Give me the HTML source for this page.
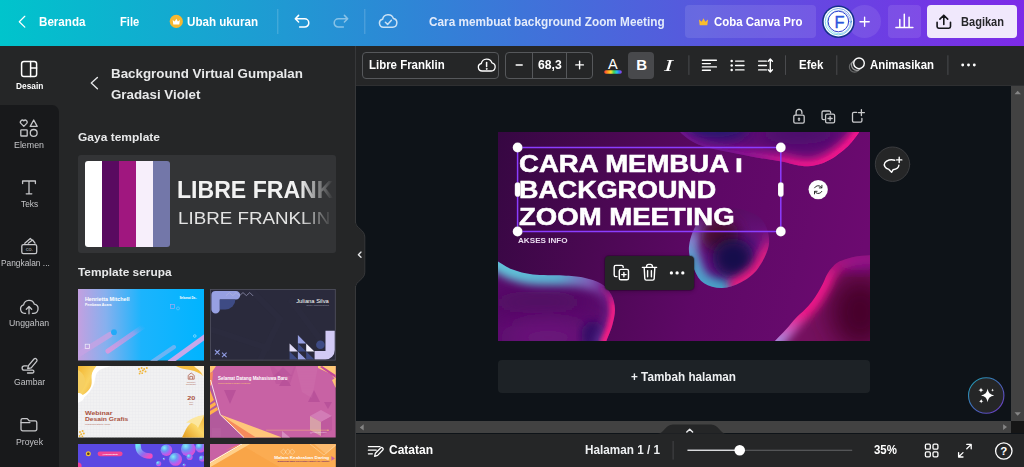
<!DOCTYPE html>
<html lang="id">
<head>
<meta charset="utf-8">
<title>Cara membuat background Zoom Meeting</title>
<style>
*{box-sizing:border-box;margin:0;padding:0}
html,body{width:1024px;height:467px;overflow:hidden;background:#0e1318;font-family:"Liberation Sans",sans-serif;color:#fff}
body{position:relative}
.a{position:absolute}
.t{position:absolute;white-space:pre;transform-origin:0 50%}
#header{left:0;top:0;width:1024px;height:46px;background:linear-gradient(90deg,#00c4cc 0%,#2e86d6 40%,#5a55de 70%,#7d2ae8 100%)}
.hb{position:absolute;top:5.3px;height:32.4px;border-radius:4px;background:rgba(255,255,255,.1)}
#nav{left:0;top:46px;width:58.5px;height:421px;background:#252627}
#navdark{left:0;top:105px;width:58.5px;height:362px;background:#18191b;border-top-right-radius:7px}
#panel{left:58.5px;top:46px;width:297.5px;height:421px;background:#252627;border-right:1px solid #37383a}
#toolbar{left:356px;top:46px;width:668px;height:40px;background:#252627;border-bottom:1px solid #2e2f31}
#footer{left:356px;top:433.5px;width:668px;height:33.5px;background:#252627}
#hscroll{left:356px;top:420.7px;width:655.4px;height:12.8px;background:#424242}
#vscroll{left:1011.4px;top:86px;width:12.6px;height:334.7px;background:#424242}
#corner{left:1011.4px;top:420.7px;width:12.6px;height:12.8px;background:#161616}
.box{position:absolute;top:51.5px;height:27.2px;border:1px solid #56585b;border-radius:4px}
#card{left:78.2px;top:154.6px;width:257.6px;height:98.4px;background:#333436;border-radius:3px;overflow:hidden}
#sw{left:84.8px;top:161px;width:85.6px;height:85.6px;border-radius:3px;overflow:hidden;display:flex}
#sw i{display:block;flex:1;height:100%}
.th{position:absolute;width:126.4px;height:71.4px;overflow:hidden}
#addpage{left:497.5px;top:360.4px;width:372px;height:33px;background:#1d2226;border-radius:4px}
#page{left:497.5px;top:131.75px;width:372.2px;height:209.3px;overflow:hidden;background:#560a5c}
#ftb{left:604.7px;top:256px;width:89.7px;height:33.8px;background:#252627;border-radius:4px;box-shadow:0 0 0 1px rgba(0,0,0,.18),0 1px 4px rgba(0,0,0,.3)}
</style>
</head>
<body>
<div id="header" class="a"></div>
<div class="hb" style="left:685px;width:130.5px"></div>
<div class="hb" style="left:848.2px;top:5.3px;width:32.9px;height:32.9px;border-radius:50%;background:rgba(255,255,255,.09)"></div>
<div class="hb" style="left:887.5px;width:33.2px"></div>
<div class="hb" style="left:927.1px;width:90.3px;background:#f0e8fc"></div>
<span class="t " style="left:39.30px;top:15px;font-size:12px;line-height:14px;font-weight:bold;color:#fff;transform:scaleX(0.9681);">Beranda</span>
<span class="t " style="left:119.50px;top:15px;font-size:12px;line-height:14px;font-weight:bold;color:#fff;transform:scaleX(0.9288);">File</span>
<span class="t " style="left:187.10px;top:15px;font-size:12px;line-height:14px;font-weight:bold;color:#fff;transform:scaleX(0.9680);">Ubah ukuran</span>
<span class="t " style="left:428.70px;top:15px;font-size:12px;line-height:14px;font-weight:bold;color:#e3ebfb;transform:scaleX(0.9815);">Cara membuat background Zoom Meeting</span>
<span class="t " style="left:713.60px;top:15px;font-size:12px;line-height:14px;font-weight:bold;color:#fff;transform:scaleX(0.9536);">Coba Canva Pro</span>
<span class="t " style="left:960.70px;top:15px;font-size:12px;line-height:14px;font-weight:bold;color:#26262a;transform:scaleX(0.9210);">Bagikan</span>
<div id="nav" class="a"></div><div id="navdark" class="a"></div>
<span class="t " style="left:16.00px;top:81px;font-size:9px;line-height:10px;font-weight:bold;color:#fff;transform:scaleX(0.9249);">Desain</span>
<span class="t " style="left:14.00px;top:140px;font-size:9px;line-height:10px;font-weight:normal;color:#c4c5c8;transform:scaleX(0.9831);">Elemen</span>
<span class="t " style="left:20.60px;top:199px;font-size:9px;line-height:10px;font-weight:normal;color:#c4c5c8;transform:scaleX(0.9235);">Teks</span>
<span class="t " style="left:1.30px;top:258px;font-size:9px;line-height:10px;font-weight:normal;color:#c4c5c8;transform:scaleX(0.9287);">Pangkalan ...</span>
<span class="t " style="left:9.00px;top:318px;font-size:9px;line-height:10px;font-weight:normal;color:#c4c5c8;transform:scaleX(0.9676);">Unggahan</span>
<span class="t " style="left:13.50px;top:377px;font-size:9px;line-height:10px;font-weight:normal;color:#c4c5c8;transform:scaleX(0.9595);">Gambar</span>
<span class="t " style="left:15.70px;top:437px;font-size:9px;line-height:10px;font-weight:normal;color:#c4c5c8;transform:scaleX(0.9637);">Proyek</span>
<div id="panel" class="a"></div>
<span class="t " style="left:111.30px;top:66px;font-size:13px;line-height:15px;font-weight:bold;color:#e8e9ea;transform:scaleX(1.0270);">Background Virtual Gumpalan</span>
<span class="t " style="left:111.30px;top:87px;font-size:13px;line-height:15px;font-weight:bold;color:#e8e9ea;transform:scaleX(1.0254);">Gradasi Violet</span>
<span class="t " style="left:78.00px;top:131px;font-size:11.5px;line-height:12px;font-weight:bold;color:#e8e9ea;transform:scaleX(1.0429);">Gaya template</span>
<span class="t " style="left:78.20px;top:266px;font-size:11.5px;line-height:12px;font-weight:bold;color:#e8e9ea;transform:scaleX(1.0326);">Template serupa</span>
<div id="card" class="a">
</div>
<div id="sw" class="a"><i style="background:#fff"></i><i style="background:#590a60"></i><i style="background:#a0177f"></i><i style="background:#f7effb"></i><i style="background:#7377a9"></i></div>
<div class="a" style="left:176px;top:160px;width:159.8px;height:90px;overflow:hidden">
<span class="t " style="left:1.30px;top:17px;font-size:23px;line-height:26px;font-weight:bold;color:#f2f2f2;transform:scaleX(1.0034);">LIBRE FRANKLIN</span>
<span class="t " style="left:1.50px;top:49px;font-size:17px;line-height:19px;font-weight:normal;color:#e4e4e4;transform:scaleX(1.1041);">LIBRE FRANKLIN</span>
<div class="a" style="left:124px;top:0;width:35.8px;height:90px;background:linear-gradient(90deg,rgba(51,52,54,0),#333436 92%)"></div>
</div>
<svg class="a" style="left:77.8px;top:289.1px" width="126.4" height="71.5" viewBox="0 0 126.4 71.5" font-family="Liberation Sans, sans-serif">
<defs><linearGradient id="t1g" x1="0" x2="1" y1="0" y2="0"><stop offset="0" stop-color="#c3a0e0"/><stop offset=".22" stop-color="#86b0ee"/><stop offset=".5" stop-color="#1cb4fd"/><stop offset="1" stop-color="#00b4ff"/></linearGradient>
<linearGradient id="t1s" x1="0" x2="1" y1="1" y2="0"><stop offset="0" stop-color="#d29be0"/><stop offset=".7" stop-color="#b79be8" stop-opacity=".7"/><stop offset="1" stop-color="#5cb0f8" stop-opacity="0"/></linearGradient>
<filter id="t1b"><feGaussianBlur stdDeviation=".5"/></filter></defs>
<rect width="126.4" height="71.5" fill="url(#t1g)"/>
<g filter="url(#t1b)">
<path d="M-3 67.6L32 45.6" stroke="#c4a2e4" stroke-opacity=".85" stroke-width="5.4" stroke-linecap="round"/>
<circle cx="36" cy="43.2" r="2.9" fill="#22aaf8"/>
<path d="M30 62L66 37" stroke="url(#t1s)" stroke-width="5" stroke-linecap="round"/>
<path d="M74 73L96 58" stroke="#a7b4ee" stroke-opacity=".6" stroke-width="4" stroke-linecap="round"/>
<path d="M92 73L128 47" stroke="#c6a8ea" stroke-width="5" stroke-linecap="round"/>
</g>
<rect x="7.2" y="55.2" width="4.4" height="4.4" fill="none" stroke="#fff" stroke-opacity=".85" stroke-width=".7"/>
<rect x="92.6" y="15.6" width="4" height="4" fill="none" stroke="#b9a8ee" stroke-width=".6"/>
<circle cx="100" cy="19.4" r="1.5" fill="none" stroke="#8fd0fa" stroke-width=".5"/>
<circle cx="116.8" cy="47" r="1.3" fill="none" stroke="#d8f0ff" stroke-width=".5"/>
<text x="6.9" y="11.9" font-size="5" font-weight="bold" fill="#fff" textLength="44.6" lengthAdjust="spacingAndGlyphs">Henrietta Mitchell</text>
<text x="6.9" y="16.9" font-size="3.2" font-weight="bold" fill="#fff" textLength="26.6" lengthAdjust="spacingAndGlyphs">Pembawa Acara</text>
<text x="101.4" y="10.3" font-size="2.6" font-weight="bold" fill="#fff" textLength="17.4" lengthAdjust="spacingAndGlyphs">Selamat Da..</text>
</svg>
<svg class="a" style="left:210.3px;top:289.1px" width="125.7" height="71.5" viewBox="0 0 125.7 71.5" font-family="Liberation Sans, sans-serif">
<rect width="125.7" height="71.5" fill="#2a2a3c"/>
<path d="M40 0L70 30 50 71M0 40L60 60M80 10L110 50" stroke="#2f2f42" stroke-width="6" fill="none" opacity=".35"/>
<path d="M5.5 2H26A4.2 4.2 0 0 1 26 10.4H9.8V20.4A4.2 4.2 0 0 1 1.4 20.4V6.1A4.1 4.1 0 0 1 5.5 2Z" fill="#97a0e2"/>
<path d="M9.8 10.4H25.4A10 10 0 0 1 15.4 20.4H9.8Z" fill="#3e4b84"/>
<path d="M16 6.6L19.4 3.6 22.8 6.6 26.2 3.6 29.6 6.6 33 3.6 36.4 6.6 39.8 3.6 43.2 7" stroke="#b9badc" stroke-width=".55" fill="none"/>
<text x="86.2" y="13.7" font-size="5.6" fill="#fff" textLength="32.6" lengthAdjust="spacingAndGlyphs">Juliana Silva</text>
<text x="96.2" y="17.4" font-size="2.3" fill="#9a9aae" textLength="22.6" lengthAdjust="spacingAndGlyphs">Guru Matematika</text>
<path d="M115.5 41.7H124.8V61A9.4 9.4 0 0 1 115.4 70.4H104.6V62H115.5Z" fill="#d2caf5"/>
<circle cx="110.4" cy="55.8" r="4.3" fill="#3e4b84"/>
<g>
<path d="M87.9 46L96.2 54.4H87.9Z" fill="#97a0e2"/>
<path d="M79.6 54.4L87.9 62.4H79.6Z" fill="#e2defa"/><path d="M87.9 54.4L96.2 62.4H87.9Z" fill="#3e4b84"/><path d="M96.2 54.4L104.5 62.4H96.2Z" fill="#f1effc"/>
<path d="M79.6 62.4L87.9 70.4H79.6Z" fill="#3e4b84"/><path d="M87.9 62.4L96.2 70.4H87.9Z" fill="#97a0e2"/><path d="M96.2 62.4L104.5 70.4H96.2Z" fill="#3e4b84"/>
<path d="M87.9 54.4V62.4H96.2Z" fill="#23233a" opacity=".0"/>
</g>
<path d="M5 61L9.6 65.6M9.6 61L5 65.6M12 63.6L16.6 68.2M16.6 63.6L12 68.2" stroke="#8f9ae0" stroke-width="1.1"/>
<rect x=".4" y=".4" width="124.9" height="70.7" fill="none" stroke="#51515f" stroke-width=".8"/>
</svg>
<svg class="a" style="left:77.8px;top:366.3px" width="126.4" height="71.5" viewBox="0 0 126.4 71.5" font-family="Liberation Sans, sans-serif">
<defs><pattern id="t3p" width="3" height="3" patternUnits="userSpaceOnUse"><path d="M3 0H0V3" fill="none" stroke="#e2e2e6" stroke-width=".3"/></pattern>
<linearGradient id="gold" x1="0" x2="1" y1="0" y2="1"><stop offset="0" stop-color="#f3b52f"/><stop offset=".5" stop-color="#f9d363"/><stop offset="1" stop-color="#e9a223"/></linearGradient>
<linearGradient id="gold2" x1="0" x2="1" y1="1" y2="0"><stop offset="0" stop-color="#e39a1c"/><stop offset=".55" stop-color="#fbd768"/><stop offset="1" stop-color="#f0b335"/></linearGradient>
<filter id="t3b"><feGaussianBlur stdDeviation=".6"/></filter></defs>
<rect width="126.4" height="71.5" fill="#f1f1f2"/><rect width="126.4" height="71.5" fill="url(#t3p)"/>
<g filter="url(#t3b)">
<path d="M0 0H34C27 1.5 21 3 18.5 7.5 16.5 12 17.5 17 13.5 23 10 29 4 33 0 37Z" fill="#fff"/>
<path d="M0 0H18.5C16 3 14 5.5 13.6 9.5 13.2 14 15 18 11.5 23 8 28 3 29.5 0 33Z" fill="url(#gold)"/>
<path d="M0 4C4.5 6.5 8 11 7 17.5 6.2 23 3 25.5 0 27.5Z" fill="#f6cf62"/>
<path d="M0 27C3 27 6 29 6 32 5 35 2 36 0 36.5Z" fill="#fff"/>
<path d="M98 0H126.4V11C122 7 118 5 112 4 106 3 101 2 98 0Z" fill="#f5be40"/>
<path d="M118 2C122 4 125 8 126.4 14V0H116Z" fill="#fff" opacity=".8"/>
<path d="M126.4 49C120 52 114 55 110 60 107 64 106 68 104 71.5H126.4Z" fill="url(#gold2)"/>
<path d="M126.4 49C118 50 112 53 108 57 114 56 118 58 120 62Z" fill="#fce7a0"/>
</g>
<g fill="#f0b63a"><circle cx="61" cy="3" r="1"/><circle cx="63.6" cy="2" r="1"/><circle cx="66.2" cy="3" r="1"/><circle cx="68.8" cy="2" r="1"/><circle cx="62.3" cy="5.4" r="1"/><circle cx="64.9" cy="4.6" r="1"/><circle cx="67.5" cy="5.4" r="1"/><circle cx="61.6" cy="7.6" r=".9"/><circle cx="64.2" cy="7.2" r=".9"/>
<circle cx="2" cy="66" r="1"/><circle cx="4.6" cy="65" r="1"/><circle cx="3.2" cy="68.2" r="1"/><circle cx="5.8" cy="67.6" r="1"/><circle cx="1.6" cy="70" r=".9"/><circle cx="4.4" cy="70.4" r=".9"/></g>
<text x="6.9" y="48.8" font-size="5.6" font-weight="bold" fill="#a9513e" textLength="27.6" lengthAdjust="spacingAndGlyphs">Webinar</text>
<text x="6.9" y="55.1" font-size="5.6" font-weight="bold" fill="#a9513e" textLength="43.4" lengthAdjust="spacingAndGlyphs">Desain Grafis</text>
<text x="6.9" y="59.4" font-size="2.3" fill="#b06a58" textLength="25.4" lengthAdjust="spacingAndGlyphs">reallygreatsite.com</text>
<path d="M110.2 13.2V9.4L113.2 7 116.2 9.4V13.2ZM111.8 13V10.4H114.6V13" fill="none" stroke="#a9513e" stroke-width=".7"/>
<text x="113.2" y="17" font-size="2" fill="#b06a58" text-anchor="middle">Corporate</text>
<text x="113.2" y="19.2" font-size="2.4" fill="#b06a58" text-anchor="middle">Company</text>
<text x="109.3" y="34.2" font-size="5.8" font-weight="bold" fill="#a9513e" textLength="8" lengthAdjust="spacingAndGlyphs">20</text>
<text x="113.3" y="36.8" font-size="1.9" fill="#b06a58" text-anchor="middle">JULI</text>
<text x="113.3" y="38.8" font-size="1.9" fill="#b06a58" text-anchor="middle">2024</text>
</svg>
<svg class="a" style="left:210.3px;top:366.3px" width="125.7" height="71.5" viewBox="0 0 125.7 71.5" font-family="Liberation Sans, sans-serif">
<defs><pattern id="t4d" width="1.6" height="1.6" patternUnits="userSpaceOnUse"><circle cx=".8" cy=".8" r=".35" fill="#e6a6cc"/></pattern></defs>
<rect width="125.7" height="71.5" fill="#c862a4"/>
<g fill="#b9529a"><path d="M64 10L73 1 82 10ZM69 20L75 10 81 20Z"/><path d="M14 24H26L20 38Z"/><path d="M98 36L104 24 110 36Z"/><path d="M114 36H122L118 43Z"/><path d="M60 0H86L80 18 66 18Z" opacity=".5"/></g>
<path d="M86 1L108 0 102 32 92 26Z" fill="url(#t4d)" opacity=".7"/><path d="M64 1H84L78 16Z" fill="url(#t4d)" opacity=".5"/>
<path d="M0 14L10 48 34 71.5H0Z" fill="#b25a9c"/>
<path d="M0 0H6L2 6 0 7Z" fill="#ffc572"/><path d="M0 7L3 6 2 18 0 20Z" fill="#f58c5e"/>
<path d="M0 24L4 34 0 37ZM0 39L5 36 6 39 0 43ZM0 45L7 41 8 44 0 49Z" fill="#ffb24c"/>
<path d="M10.2 48.6L72 71.5H46L34 71.5Z" fill="#ffc67a"/><path d="M10.2 48.6L46 71.5H34Z" fill="#f68a5c"/>
<path d="M.6 14L10.2 48.6 34 71.5" stroke="#fff" stroke-width=".8" fill="none"/>
<path d="M100 50L111 44 122 50 111 56Z" fill="#d27cb6"/><path d="M100 50L111 56V70L100 64Z" fill="#d7a0a8"/><path d="M111 56L122 50V64L111 70Z" fill="#bf5a9e"/>
<path d="M108 0H125.7V14L121 8 108 2Z" fill="#ffc978"/><path d="M112 0L125.7 9V12L110 1Z" fill="#c2489a"/>
<path d="M122 14L125.7 12V22Z" fill="#ffc572"/>
<path d="M72 65L80 71.5H72Z" fill="#d88ec0"/>
<rect x="2" y="62" width="9" height="9" fill="url(#t4d)" opacity=".45"/>
<path d="M56.2 64.2H117.6" stroke="#ffc572" stroke-width=".45"/><circle cx="118" cy="64.2" r=".7" fill="#ffc572"/>
<text x="8" y="14.2" font-size="4.7" font-weight="bold" fill="#fff" textLength="69.6" lengthAdjust="spacingAndGlyphs">Selamat Datang Mahasiswa Baru</text>
<text x="8" y="18.5" font-size="2.4" fill="#ffcf6e" textLength="32.2" lengthAdjust="spacingAndGlyphs">Universitas Fauget Wiguna</text>
<text x="100" y="66.6" font-size="1.8" fill="#f4d6ea" textLength="17" lengthAdjust="spacingAndGlyphs">@reallygreatsite</text>
</svg>
<svg class="a" style="left:77.8px;top:443.7px" width="126.4" height="23.3" viewBox="0 0 126.4 23.3" font-family="Liberation Sans, sans-serif">
<defs><radialGradient id="sp" cx=".32" cy=".3" r=".85"><stop offset="0" stop-color="#7ff0f4"/><stop offset=".35" stop-color="#6a98f4"/><stop offset=".65" stop-color="#b85cf0"/><stop offset="1" stop-color="#f24cb4"/></radialGradient>
<linearGradient id="tube" x1="0" x2="1" y1="0" y2="1"><stop offset="0" stop-color="#6fe6f2"/><stop offset=".6" stop-color="#8f6cf2"/><stop offset="1" stop-color="#f04cc0"/></linearGradient></defs>
<rect width="126.4" height="23.3" fill="#5a49e2"/>
<path d="M60 1C60 8 64 12 72 12" fill="none" stroke="url(#tube)" stroke-width="5.4" stroke-linecap="round"/>
<circle cx="110.3" cy="5" r="7.3" fill="url(#sp)"/><circle cx="88.4" cy="6.2" r="5.8" fill="url(#sp)"/><circle cx="97.5" cy="15.3" r="6.5" fill="url(#sp)"/><circle cx="122.6" cy="3.4" r="5.2" fill="url(#sp)"/><circle cx="111.6" cy="13" r="3.1" fill="url(#sp)"/><circle cx="80.6" cy="19.6" r="2.6" fill="url(#sp)"/><circle cx="124" cy="14.6" r="3" fill="url(#sp)"/><circle cx="106.2" cy="21" r="1.6" fill="url(#sp)"/><circle cx="86" cy="15" r="1.2" fill="url(#sp)"/>
<circle cx="0" cy="22" r="3.6" fill="#ee3f9a"/>
<circle cx="10.3" cy="9.7" r="2.5" fill="#f2c23c"/><circle cx="10.3" cy="9.7" r="1.3" fill="#5a3a1c"/>
<rect x="19.6" y="7.4" width="25" height="4.8" rx="2.4" fill="#ef4597"/>
<text x="24.4" y="10.7" font-size="2.4" font-weight="bold" fill="#fff" textLength="15.6" lengthAdjust="spacingAndGlyphs">@reallygreatsite</text>
</svg>
<svg class="a" style="left:210.3px;top:443.7px" width="125.7" height="23.3" viewBox="0 0 125.7 23.3" font-family="Liberation Sans, sans-serif">
<rect width="125.7" height="23.3" fill="#f9a548"/>
<path d="M30 0H125.7V23.3H70Z" fill="#fbb05a" opacity=".6"/>
<path d="M104 0L116 10 125.7 2V0Z" fill="#fcc27c" opacity=".7"/><path d="M100 0L114 11 125.7 1" fill="none" stroke="#fde0b8" stroke-width=".5"/>
<path d="M0 0H31L0 18Z" fill="#c862a4"/>
<path d="M31 0L0 18V19.2L33 0Z" fill="#fff" opacity=".9"/><path d="M33 0L0 19.2V23.3L40 0Z" fill="#ffd08a"/>
<path d="M16 6L30 0 26 3Z" fill="#f58c5e"/>
<path d="M70.6 7.8L73.4 5.2 76.2 7.8 73.4 10.4ZM75 7.8L77.8 5.2 80.6 7.8 77.8 10.4ZM79.4 7.8L82.2 5.2 85 7.8 82.2 10.4Z" fill="none" stroke="#fde6c4" stroke-width=".45"/>
<text x="64.2" y="15" font-size="4.4" font-weight="bold" fill="#fff" textLength="55" lengthAdjust="spacingAndGlyphs">Malam Keakraban Daring</text>
<text x="67.6" y="18.4" font-size="2.2" font-weight="bold" fill="#7a2a6c" textLength="51.6" lengthAdjust="spacingAndGlyphs">Mahasiswa Baru Universitas Fauget | 20 Agustus</text>
<path d="M121.4 12L125 14.4 121.4 16.8Z" fill="#c862a4"/>
</svg>

<div id="toolbar" class="a"></div>
<div class="box" style="left:362.1px;width:136.7px"></div>
<div class="box" style="left:505.4px;width:87.3px"></div>
<div class="a" style="left:532px;top:52px;width:1px;height:26px;background:#56585b"></div>
<div class="a" style="left:565.7px;top:52px;width:1px;height:26px;background:#56585b"></div>
<div class="a" style="left:628px;top:51.5px;width:26.2px;height:27.2px;border-radius:4px;background:#48494c"></div>
<span class="t " style="left:368.70px;top:58px;font-size:12px;line-height:14px;font-weight:bold;color:#fff;transform:scaleX(0.9539);">Libre Franklin</span>
<span class="t " style="left:537.90px;top:58px;font-size:12px;line-height:14px;font-weight:bold;color:#fff;transform:scaleX(1.0146);">68,3</span>
<span class="t " style="left:608.00px;top:56px;font-size:14.5px;line-height:16px;font-weight:normal;color:#fff;transform:scaleX(1.0000);">A</span>
<span class="t " style="left:636.20px;top:56px;font-size:15px;line-height:17px;font-weight:bold;color:#fff;transform:scaleX(1.0000);">B</span>
<span class="t " style="left:664.40px;top:57px;font-size:16px;line-height:17px;font-weight:normal;color:#fff;transform:scaleX(1.6891);font-family:'Liberation Serif',serif;font-style:italic;">I</span>
<span class="t " style="left:799.30px;top:58px;font-size:12px;line-height:14px;font-weight:bold;color:#fff;transform:scaleX(0.9582);">Efek</span>
<span class="t " style="left:870.40px;top:58px;font-size:12px;line-height:14px;font-weight:bold;color:#fff;transform:scaleX(0.9501);">Animasikan</span>
<div id="page" class="a"><svg class="a" style="left:0;top:0" width="372.2" height="209.3" viewBox="0 0 372 209" preserveAspectRatio="none">
<defs>
<linearGradient id="pb" gradientUnits="userSpaceOnUse" x1="0" y1="0" x2="372" y2="90"><stop offset="0" stop-color="#360742"/><stop offset=".3" stop-color="#4a0852"/><stop offset=".6" stop-color="#5e0866"/><stop offset=".85" stop-color="#660a6c"/><stop offset="1" stop-color="#6c0a70"/></linearGradient>
<linearGradient id="g1" gradientUnits="userSpaceOnUse" x1="225" y1="0" x2="345" y2="0"><stop offset="0" stop-color="#7c1294" stop-opacity=".55"/><stop offset=".3" stop-color="#9c1490"/><stop offset=".6" stop-color="#e0168c"/><stop offset="1" stop-color="#f0188c"/></linearGradient>
<linearGradient id="f2" gradientUnits="userSpaceOnUse" x1="0" y1="76" x2="0" y2="120"><stop offset="0" stop-color="#5a0c64"/><stop offset="1" stop-color="#6a1486"/></linearGradient>
<linearGradient id="g3" gradientUnits="userSpaceOnUse" x1="0" y1="0" x2="110" y2="0"><stop offset="0" stop-color="#62c6da"/><stop offset=".55" stop-color="#5aaed0"/><stop offset=".85" stop-color="#8a6cc8" stop-opacity=".8"/><stop offset="1" stop-color="#8a3cb0" stop-opacity=".3"/></linearGradient>
<linearGradient id="g3p" gradientUnits="userSpaceOnUse" x1="0" y1="150" x2="0" y2="209"><stop offset="0" stop-color="#a01890" stop-opacity="0"/><stop offset=".4" stop-color="#e81a84"/><stop offset="1" stop-color="#f01c84"/></linearGradient>
<linearGradient id="g4" gradientUnits="userSpaceOnUse" x1="0" y1="120" x2="0" y2="209"><stop offset="0" stop-color="#a0148c" stop-opacity=".4"/><stop offset=".3" stop-color="#e6168a"/><stop offset=".7" stop-color="#ee1888"/><stop offset=".88" stop-color="#c85cc0"/><stop offset="1" stop-color="#a690e2"/></linearGradient>
<linearGradient id="g2" gradientUnits="userSpaceOnUse" x1="0" y1="95" x2="0" y2="150"><stop offset="0" stop-color="#a01890" stop-opacity="0"/><stop offset=".45" stop-color="#e01a80"/><stop offset="1" stop-color="#f01c80"/></linearGradient>
<linearGradient id="g2l" gradientUnits="userSpaceOnUse" x1="0" y1="85" x2="0" y2="155"><stop offset="0" stop-color="#8a5cc0" stop-opacity=".15"/><stop offset=".3" stop-color="#8c84d6"/><stop offset=".55" stop-color="#5c9ccc"/><stop offset="1" stop-color="#48a0c8"/></linearGradient>
<filter id="b2" x="-20%" y="-20%" width="140%" height="140%"><feGaussianBlur stdDeviation="2"/></filter>
<filter id="b4" x="-20%" y="-20%" width="140%" height="140%"><feGaussianBlur stdDeviation="4"/></filter>
<filter id="b7" x="-30%" y="-30%" width="160%" height="160%"><feGaussianBlur stdDeviation="7"/></filter>
<filter id="b12" x="-50%" y="-50%" width="200%" height="200%"><feGaussianBlur stdDeviation="12"/></filter>
<clipPath id="c1"><path d="M178.0 -6.0C179.0 -4.7 180.8 -0.8 184.0 2.0C187.2 4.8 192.2 8.6 197.0 11.0C201.8 13.4 207.0 14.9 213.0 16.5C219.0 18.1 226.3 19.2 233.0 20.5C239.7 21.8 246.8 23.4 253.0 24.5C259.2 25.6 264.7 26.4 270.0 27.3C275.3 28.2 280.3 28.9 285.0 29.8C289.7 30.8 293.8 32.3 298.0 33.0C302.2 33.7 306.0 34.4 310.0 34.2C314.0 34.0 318.0 33.3 322.0 32.0C326.0 30.7 330.5 28.5 334.0 26.5C337.5 24.5 340.3 22.1 343.0 20.0C345.7 17.9 347.8 16.2 350.0 14.0C352.2 11.8 354.2 9.3 356.0 7.0C357.8 4.7 359.7 2.2 361.0 0.0C362.3 -2.2 363.5 -5.0 364.0 -6.0Z"/></clipPath>
<clipPath id="c2"><path d="M233.0 76.0C242.8 75.8 255.7 80.3 262.0 86.0C268.3 91.7 271.3 101.7 271.0 110.0C270.7 118.3 264.7 129.3 260.0 136.0C255.3 142.7 249.0 146.7 243.0 150.0C237.0 153.3 230.2 155.5 224.0 155.7C217.8 155.9 210.7 154.1 206.0 151.0C201.3 147.9 198.5 143.2 196.0 137.0C193.5 130.8 189.8 121.8 191.0 113.5C192.2 105.2 196.0 93.2 203.0 87.0C210.0 80.8 223.2 76.2 233.0 76.0Z"/></clipPath>
<clipPath id="c3"><path d="M-6.0 126.0C-5.0 126.5 -3.4 127.4 0.0 129.3C3.4 131.2 8.8 135.2 14.6 137.4C20.4 139.6 26.4 141.4 34.8 142.4C43.2 143.4 56.6 142.9 65.0 143.4C73.4 143.9 78.7 144.1 85.1 145.4C91.5 146.8 98.5 148.6 103.2 151.5C107.9 154.4 111.0 158.4 113.3 162.6C115.6 166.8 116.7 171.7 116.9 176.7C117.1 181.7 115.7 187.4 114.3 192.8C112.9 198.2 109.7 205.0 108.3 208.9C106.9 212.8 106.4 214.8 106.0 216.0L-6 216Z"/></clipPath>
<clipPath id="c4"><path d="M270.0 216.0C271.1 214.8 273.5 212.2 276.5 209.0C279.5 205.8 284.5 200.8 288.0 197.0C291.5 193.2 294.5 189.2 297.5 186.0C300.5 182.8 303.3 180.7 306.0 178.0C308.7 175.3 311.2 172.8 313.5 169.8C315.8 166.8 318.0 163.3 320.0 160.0C322.0 156.7 324.0 152.7 325.5 149.7C327.0 146.7 327.6 144.3 329.0 142.0C330.4 139.7 331.9 137.5 333.6 135.6C335.3 133.7 337.0 131.8 339.0 130.5C341.0 129.2 343.2 128.4 345.7 127.5C348.2 126.6 351.0 125.7 354.0 125.0C357.0 124.3 360.8 123.8 363.8 123.5C366.8 123.2 369.3 123.1 372.0 123.0C374.7 122.9 378.7 123.0 380.0 123.0L380 216Z"/></clipPath>
</defs>
<rect width="372" height="209" fill="url(#pb)"/>
<g clip-path="url(#c1)">
<rect x="170" y="-6" width="202" height="50" fill="#5e0c74"/>
<ellipse cx="215" cy="-4" rx="36" ry="14" fill="#2c1470" filter="url(#b7)"/>
<ellipse cx="300" cy="2" rx="36" ry="10" fill="#4c0c6c" filter="url(#b7)"/>
<path d="M178.0 -6.0C179.0 -4.7 180.8 -0.8 184.0 2.0C187.2 4.8 192.2 8.6 197.0 11.0C201.8 13.4 207.0 14.9 213.0 16.5C219.0 18.1 226.3 19.2 233.0 20.5C239.7 21.8 246.8 23.4 253.0 24.5C259.2 25.6 264.7 26.4 270.0 27.3C275.3 28.2 280.3 28.9 285.0 29.8C289.7 30.8 293.8 32.3 298.0 33.0C302.2 33.7 306.0 34.4 310.0 34.2C314.0 34.0 318.0 33.3 322.0 32.0C326.0 30.7 330.5 28.5 334.0 26.5C337.5 24.5 340.3 22.1 343.0 20.0C345.7 17.9 347.8 16.2 350.0 14.0C352.2 11.8 354.2 9.3 356.0 7.0C357.8 4.7 359.7 2.2 361.0 0.0C362.3 -2.2 363.5 -5.0 364.0 -6.0" fill="none" stroke="url(#g1)" stroke-width="15" filter="url(#b4)"/>
<path d="M178.0 -6.0C179.0 -4.7 180.8 -0.8 184.0 2.0C187.2 4.8 192.2 8.6 197.0 11.0C201.8 13.4 207.0 14.9 213.0 16.5C219.0 18.1 226.3 19.2 233.0 20.5C239.7 21.8 246.8 23.4 253.0 24.5C259.2 25.6 264.7 26.4 270.0 27.3C275.3 28.2 280.3 28.9 285.0 29.8C289.7 30.8 293.8 32.3 298.0 33.0C302.2 33.7 306.0 34.4 310.0 34.2C314.0 34.0 318.0 33.3 322.0 32.0C326.0 30.7 330.5 28.5 334.0 26.5C337.5 24.5 340.3 22.1 343.0 20.0C345.7 17.9 347.8 16.2 350.0 14.0C352.2 11.8 354.2 9.3 356.0 7.0C357.8 4.7 359.7 2.2 361.0 0.0C362.3 -2.2 363.5 -5.0 364.0 -6.0" fill="none" stroke="url(#g1)" stroke-width="5" filter="url(#b2)" opacity=".9"/>
</g>
<g clip-path="url(#c2)">
<rect x="185" y="70" width="95" height="95" fill="url(#f2)"/>
<path d="M203.0 87.0C201.0 91.4 192.2 105.2 191.0 113.5C189.8 121.8 193.5 130.8 196.0 137.0C198.5 143.2 201.3 147.9 206.0 151.0C210.7 154.1 219.3 155.2 224.0 155.7C228.7 156.2 232.3 154.3 234.0 154.0" fill="none" stroke="url(#g2l)" stroke-width="19" filter="url(#b4)"/>
<ellipse cx="222" cy="103" rx="19" ry="17" fill="#48082e" filter="url(#b7)"/>
<ellipse cx="235" cy="126" rx="21" ry="20" fill="#16084c" filter="url(#b7)"/>
<path d="M268.0 95.0C268.5 97.5 272.3 103.2 271.0 110.0C269.7 116.8 264.7 129.3 260.0 136.0C255.3 142.7 247.7 146.9 243.0 150.0C238.3 153.1 233.8 153.8 232.0 154.5" fill="none" stroke="url(#g2)" stroke-width="13" filter="url(#b4)"/>
</g>
<g clip-path="url(#c3)">
<rect x="-6" y="120" width="130" height="96" fill="#5a0c6c"/>
<ellipse cx="40" cy="170" rx="55" ry="12" fill="#500a60" filter="url(#b12)"/>
<ellipse cx="50" cy="205" rx="45" ry="16" fill="#6c127c" filter="url(#b12)"/>
<ellipse cx="95" cy="203" rx="12" ry="14" fill="#340a68" filter="url(#b4)"/>
<path d="M-6.0 126.0C-5.0 126.5 -3.4 127.4 0.0 129.3C3.4 131.2 8.8 135.2 14.6 137.4C20.4 139.6 26.4 141.4 34.8 142.4C43.2 143.4 56.6 142.9 65.0 143.4C73.4 143.9 78.7 144.1 85.1 145.4C91.5 146.8 98.5 148.6 103.2 151.5C107.9 154.4 111.0 158.4 113.3 162.6C115.6 166.8 116.7 171.7 116.9 176.7C117.1 181.7 115.7 187.4 114.3 192.8C112.9 198.2 109.7 205.0 108.3 208.9C106.9 212.8 106.4 214.8 106.0 216.0" fill="none" stroke="url(#g3)" stroke-width="20" filter="url(#b4)"/>
<path d="M103.2 151.5C104.9 153.3 111.0 158.4 113.3 162.6C115.6 166.8 116.7 171.7 116.9 176.7C117.1 181.7 115.7 187.4 114.3 192.8C112.9 198.2 109.7 205.0 108.3 208.9C106.9 212.8 106.4 214.8 106.0 216.0" fill="none" stroke="url(#g3p)" stroke-width="11" filter="url(#b2)"/>
</g>
<g clip-path="url(#c4)">
<rect x="268" y="118" width="112" height="98" fill="#74105e"/>
<ellipse cx="362" cy="180" rx="30" ry="36" fill="#46042a" filter="url(#b12)"/>
<ellipse cx="362" cy="128" rx="24" ry="10" fill="#780e84" filter="url(#b7)"/>
<path d="M270.0 216.0C271.1 214.8 273.5 212.2 276.5 209.0C279.5 205.8 284.5 200.8 288.0 197.0C291.5 193.2 294.5 189.2 297.5 186.0C300.5 182.8 303.3 180.7 306.0 178.0C308.7 175.3 311.2 172.8 313.5 169.8C315.8 166.8 318.0 163.3 320.0 160.0C322.0 156.7 324.0 152.7 325.5 149.7C327.0 146.7 327.6 144.3 329.0 142.0C330.4 139.7 331.9 137.5 333.6 135.6C335.3 133.7 337.0 131.8 339.0 130.5C341.0 129.2 343.2 128.4 345.7 127.5C348.2 126.6 351.0 125.7 354.0 125.0C357.0 124.3 360.8 123.8 363.8 123.5C366.8 123.2 369.3 123.1 372.0 123.0C374.7 122.9 378.7 123.0 380.0 123.0" fill="none" stroke="url(#g4)" stroke-width="17" filter="url(#b4)"/>
</g>
</svg>
</div>
<div id="addpage" class="a"></div>
<span class="t " style="left:631.00px;top:370px;font-size:12px;line-height:14px;font-weight:bold;color:#eef0f2;transform:scaleX(0.9769);">+ Tambah halaman</span>
<div id="hscroll" class="a"></div><div id="vscroll" class="a"></div><div id="corner" class="a"></div>
<div id="footer" class="a"></div>
<span class="t " style="left:388.60px;top:443px;font-size:12px;line-height:14px;font-weight:bold;color:#fff;transform:scaleX(1.0019);">Catatan</span>
<span class="t " style="left:585.00px;top:443px;font-size:12px;line-height:14px;font-weight:bold;color:#eef0f2;transform:scaleX(0.9776);">Halaman 1 / 1</span>
<span class="t " style="left:873.70px;top:443px;font-size:12px;line-height:14px;font-weight:bold;color:#fff;transform:scaleX(0.9529);">35%</span>
<span class="t " style="left:518.70px;top:150px;font-size:24px;line-height:27px;font-weight:bold;color:#fff;transform:scaleX(1.1470);-webkit-text-stroke:0.55px #fff;">CARA MEMBUA<span style="display:inline-block;margin-left:1.3px;clip-path:inset(8.2px 0 0 0)">T</span></span>
<span class="t " style="left:518.80px;top:176px;font-size:24px;line-height:27px;font-weight:bold;color:#fff;transform:scaleX(1.1205);-webkit-text-stroke:0.55px #fff;">BACKGROUND</span>
<span class="t " style="left:518.60px;top:203px;font-size:24px;line-height:27px;font-weight:bold;color:#fff;transform:scaleX(1.1468);-webkit-text-stroke:0.55px #fff;">ZOOM MEETING</span>
<span class="t " style="left:518.40px;top:236px;font-size:8px;line-height:9px;font-weight:bold;color:#eadcf0;transform:scaleX(1.0142);">AKSES INFO</span>
<div id="ftb" class="a"></div>
<svg class="a" style="left:0;top:0;pointer-events:none" width="1024" height="467" viewBox="0 0 1024 467" fill="none" stroke-linecap="round" stroke-linejoin="round">
<defs>
<linearGradient id="rb" x1="0" x2="1" y1="0" y2="0"><stop offset="0" stop-color="#ff3b3b"/><stop offset=".2" stop-color="#ff9a1f"/><stop offset=".38" stop-color="#ffe02e"/><stop offset=".55" stop-color="#3bd45a"/><stop offset=".72" stop-color="#22c3ee"/><stop offset=".86" stop-color="#3b6cf5"/><stop offset="1" stop-color="#a33df2"/></linearGradient>
<linearGradient id="mg" x1="0" x2="1" y1="0" y2="1"><stop offset="0" stop-color="#1fc8d8"/><stop offset=".5" stop-color="#4f7be0"/><stop offset="1" stop-color="#8b3ff0"/></linearGradient>
<linearGradient id="av" x1="0" x2="1" y1="1" y2="0"><stop offset="0" stop-color="#22d3d6"/><stop offset="1" stop-color="#2d55d8"/></linearGradient>
</defs>
<!-- header -->
<g stroke="#fff" stroke-width="1.25">
<path d="M24.8 16.3L19.3 21.7 24.8 27.1"/>
</g>
<circle cx="176.3" cy="21.4" r="6.6" fill="#f8b830"/>
<path d="M173.3 24.4L172.7 19.9 174.7 21.5 176.3 18.7 177.9 21.5 179.9 19.9 179.3 24.4Z" fill="#fff"/>
<rect x="277.3" y="9" width="1" height="25" fill="#fff" fill-opacity=".22"/>
<rect x="364.3" y="9" width="1" height="25" fill="#fff" fill-opacity=".22"/>
<g stroke="#fff" stroke-width="1.5">
<path d="M298.6 15.4L295.3 18.7 298.6 22M295.5 18.7H304.6A4.2 4.2 0 0 1 304.6 27.1H299.6"/>
<g opacity=".45"><path d="M344.4 15.4L347.7 18.7 344.4 22M347.5 18.7H338.4A4.2 4.2 0 0 0 338.4 27.1H343.4"/></g>
<g opacity=".75"><path d="M383.6 27.2A4 4 0 0 1 382.6 19.3 5.6 5.6 0 0 1 393.4 18.6 4.35 4.35 0 0 1 392.6 27.2Z"/><path d="M385.4 22.3L387.6 24.4 391.4 20.3"/></g>
</g>
<path d="M699.7 25.3L699 19.6 701.7 21.7 703.5 18.2 705.3 21.7 708 19.6 707.3 25.3Z" fill="#fbbd2c"/>
<!-- avatar -->
<circle cx="838.4" cy="21.7" r="16.3" fill="#15318c"/>
<circle cx="838.4" cy="21.7" r="14.7" fill="#fff"/>
<circle cx="838.4" cy="21.7" r="13.2" stroke="url(#av)" stroke-width=".8" opacity=".75"/>
<circle cx="838.9" cy="22.1" r="11.6" stroke="url(#av)" stroke-width=".8" opacity=".55"/>
<circle cx="838.4" cy="21.5" r="10.3" stroke="#3040d0" stroke-width="1"/>
<text x="839.4" y="27.7" text-anchor="middle" font-family="Liberation Sans, sans-serif" font-size="16.4" fill="#2b55dc" stroke="#2b55dc" stroke-width=".35">F</text>
<g stroke="#fff" stroke-width="1.5">
<path d="M860 21.7H869.2M864.6 17.1V26.3" stroke-width="1.35"/>
<path d="M895.9 27.4H912.9M899.8 27V19.6M904.3 27V14.2M909.1 27V17.3"/>
</g>
<g stroke="#15161a" stroke-width="1.6">
<path d="M937.1 22.2V26.6A1.6 1.6 0 0 0 938.7 28.2H948.9A1.6 1.6 0 0 0 950.5 26.6V22.2M943.8 24.4V15.4M939.9 19.1L943.8 15.2 947.7 19.1"/>
</g>
<!-- nav icons -->
<g stroke="#fff" stroke-width="1.5">
<rect x="21.6" y="61.5" width="15" height="15" rx="2.3"/><path d="M30.6 61.5V76.5M30.6 68.1H36.6"/>
</g>
<g stroke="#c6c7ca" stroke-width="1.3">
<!-- elemen -->
<path d="M23.8 126.4L20.9 123.4A1.9 1.9 0 0 1 23.8 120.8 1.9 1.9 0 0 1 26.7 123.4Z"/>
<path d="M33.7 120L37.2 126.4H30.2Z"/>
<rect x="20.8" y="129.8" width="6.4" height="6.2" rx=".6"/>
<circle cx="33.7" cy="132.9" r="3.4"/>
<!-- teks -->
<path d="M22.6 183.6V181H35.4V183.6M29 181V193.8M26.2 193.8H31.8"/>
<!-- pangkalan -->
<rect x="21.8" y="244.6" width="14.9" height="9" rx="1.6"/>
<path d="M24.8 243.2L30.3 238.4 32 240.2M28.2 243.2L32.6 240 35 243.2"/>
<!-- unggahan -->
<path d="M25.6 313.3H24.6A4.3 4.3 0 0 1 23.6 304.9 5.6 5.6 0 0 1 34.4 304.2 4.6 4.6 0 0 1 33.4 313.3H32.4"/>
<path d="M29 313.8V306.6M26.3 309.2L29 306.5 31.7 309.2"/>
<!-- gambar -->
<path d="M28.4 365.6L34 359A1.8 1.8 0 0 1 36.8 361.2L31.2 367.9 27.7 368.6Z"/>
<path d="M27.2 365.8H24.3A2.2 2.2 0 0 0 24.3 370.2H32.5A1.4 1.4 0 0 1 32.5 373H27.5"/>
<!-- proyek -->
<path d="M21 420.2A1.6 1.6 0 0 1 22.6 418.6H27.2L29.2 420.8H35.2A1.6 1.6 0 0 1 36.8 422.4V429.2A1.6 1.6 0 0 1 35.2 430.8H22.6A1.6 1.6 0 0 1 21 429.2Z"/>
<path d="M21 422.6H30" stroke-width="1.1"/>
</g>
<text x="29.2" y="250.8" text-anchor="middle" font-family="Liberation Sans, sans-serif" font-size="4" font-weight="bold" fill="#c6c7ca" fill-opacity=".8">CO.</text>
<!-- panel chevrons -->
<path d="M97.4 77.4L91.3 83.1 97.4 88.8" stroke="#e4e5e7" stroke-width="1.4"/>
<!-- panel collapse handle -->
<path d="M355.5 222.4C355.5 228 364.8 229.6 364.8 237V272.2C364.8 279.6 355.5 281.2 355.5 286.8Z" fill="#252627" stroke="#37383a" stroke-width="1"/>
<rect x="354" y="223.4" width="2" height="62.4" fill="#252627"/>
<path d="M361 252.1L358.4 254.7 361 257.3" stroke="#e6e7e9" stroke-width="1.35"/>
<!-- toolbar icons -->
<g stroke="#fff" stroke-width="1.3">
<path d="M482.2 71A3.8 3.8 0 0 1 481.3 63.5 5.5 5.5 0 0 1 491.9 62.8 4.15 4.15 0 0 1 491.2 71Z"/>
<path d="M486.6 62.6V66.6" stroke-width="1.5"/><circle cx="486.6" cy="68.9" r=".5" fill="#fff" stroke-width=".8"/>
<path d="M516.2 64.9H522.2" stroke-width="1.5"/>
<path d="M575.8 64.9H583.4M579.6 61.1V68.7" stroke-width="1.4"/>
</g>
<rect x="604.2" y="70.3" width="17.6" height="3.5" rx="1.75" fill="url(#rb)"/>
<rect x="688.4" y="55.3" width="1" height="19.6" fill="#4a4b4e"/>
<rect x="785" y="55.3" width="1" height="19.6" fill="#4a4b4e"/>
<rect x="836.3" y="55.3" width="1" height="19.6" fill="#4a4b4e"/>
<rect x="947.4" y="55.3" width="1" height="19.6" fill="#4a4b4e"/>
<g stroke="#fff" stroke-width="1.4">
<path d="M702.4 60.3H716.4M702.4 63.6H710.4M702.4 66.9H716.4M702.4 70.2H710.4"/>
<path d="M735.6 61.1H744M735.6 65.5H744M735.6 69.9H744"/>
<path d="M758.6 61.1H766.4M758.6 65.5H766.4M758.6 69.9H766.4M770.3 59.3V71.7M768.2 61.2L770.3 59.1 772.4 61.2M768.2 69.8L770.3 71.9 772.4 69.8"/>
</g>
<g fill="#fff"><circle cx="731.7" cy="61.1" r="1.25"/><circle cx="731.7" cy="65.5" r="1.25"/><circle cx="731.7" cy="69.9" r="1.25"/>
<circle cx="962.7" cy="65" r="1.45"/><circle cx="968.5" cy="65" r="1.45"/><circle cx="974.3" cy="65" r="1.45"/></g>
<!-- animate -->
<circle cx="854.6" cy="67" r="5.2" stroke="#fff" stroke-opacity=".3" stroke-width="1.2"/>
<circle cx="856.7" cy="65.1" r="5.2" stroke="#fff" stroke-opacity=".55" stroke-width="1.2" fill="#252627"/>
<circle cx="859" cy="63.3" r="5.3" stroke="#fff" stroke-width="1.4" fill="#252627"/>
<!-- above-page icons -->
<g stroke="#c9cacc" stroke-width="1.3">
<rect x="793.8" y="115.1" width="10.4" height="8" rx="1.4"/><path d="M796.1 115V112.3A2.9 2.9 0 0 1 801.9 112.3V113.4"/><path d="M799 117.2L800.7 119.3H799.7V121H798.3V119.3H797.3Z" fill="#c9cacc" stroke="none"/>
<path d="M824.4 119.6H823.4A1.4 1.4 0 0 1 822 118.2V112.4A1.4 1.4 0 0 1 823.4 111H829.2A1.4 1.4 0 0 1 830.6 112.4V113"/><rect x="825.6" y="114.2" width="9" height="8.6" rx="1.4"/><path d="M830.1 116.4V120.6M828 118.5H832.2"/>
<path d="M856.6 112.4H853.8A1.3 1.3 0 0 0 852.5 113.7V120.8A1.3 1.3 0 0 0 853.8 122.1H860.6A1.3 1.3 0 0 0 861.9 120.8V118.4M861.4 109.6V115.6M858.4 112.6H864.4"/>
</g>
<!-- comment button -->
<circle cx="892.5" cy="164.2" r="17.2" fill="#252627" stroke="#3b3c3f" stroke-width="1"/>
<g stroke="#fff" stroke-width="1.4">
<path d="M894.74 160.27A7.2 5 0 1 0 888.9 169.4L891.6 172.3 893.1 169.7A7.2 5 0 0 0 898.87 165.24"/><path d="M899.2 157.3V162.5M896.6 159.9H901.8"/>
</g>
<!-- footer icons -->
<g stroke="#fff" stroke-width="1.3">
<path d="M368.4 446.6H380M368.4 450.2H376.2M368.4 453.8H372.4"/>
<path d="M374.6 456.4L375.4 453.2 380.6 448A1.3 1.3 0 0 1 382.8 450L377.6 455.4Z"/>
</g>
<rect x="672.6" y="441" width="1" height="18.6" fill="#444548"/>
<rect x="687.5" y="449.7" width="164.7" height="1.2" fill="#5a5b5e"/>
<rect x="687.5" y="449.6" width="52" height="1.4" fill="#d8d9db"/>
<circle cx="739.7" cy="450.3" r="5.3" fill="#fff"/>
<g stroke="#fff" stroke-width="1.3">
<rect x="925.4" y="444.2" width="4.9" height="4.9" rx="1.2"/><rect x="933" y="444.2" width="4.9" height="4.9" rx="1.2"/><rect x="925.4" y="451.9" width="4.9" height="4.9" rx="1.2"/><rect x="933" y="451.9" width="4.9" height="4.9" rx="1.2"/>
<path d="M966.8 444.4H971.2V448.8M971 444.6L966.8 448.8M963 457H958.6V452.6M958.8 456.8L963 452.6"/>
<circle cx="1003.8" cy="451" r="8.2"/>
</g>
<text x="1003.8" y="455.2" text-anchor="middle" font-family="Liberation Sans, sans-serif" font-size="11.5" font-weight="bold" fill="#fff">?</text>
<!-- bump tab -->
<path d="M657 433.8C664 433.8 665 424.4 673 424.4H711C719 424.4 720 433.8 727 433.8Z" fill="#252627"/>
<path d="M686.8 432L689.7 429.2 692.6 432" stroke="#e8e9eb" stroke-width="1.5"/>
<!-- scroll arrows -->
<g fill="#858585"><path d="M1014.5 94.3L1017.7 90.7 1020.9 94.3Z"/><path d="M1014.5 412.2L1017.7 415.7 1020.9 412.2Z"/><path d="M363.7 424.3L359.8 427.4 363.7 430.5Z"/><path d="M1003.1 424.3L1007 427.1 1003.1 429.9Z"/></g>
<!-- magic button -->
<circle cx="986.2" cy="395.5" r="17.7" fill="#252627" stroke="url(#mg)" stroke-width="1.1" stroke-opacity=".8"/>
<g fill="#fff"><path d="M987.6 388.6C988.4 393 989.8 394.4 994.2 395.4 989.8 396.4 988.4 397.8 987.6 402.2 986.8 397.8 985.4 396.4 981 395.4 985.4 394.4 986.8 393 987.6 388.6Z"/>
<path d="M981 387.6C981.3 389.3 981.9 389.9 983.6 390.2 981.9 390.5 981.3 391.1 981 392.8 980.7 391.1 980.1 390.5 978.4 390.2 980.1 389.9 980.7 389.3 981 387.6Z"/>
<path d="M981.2 399C981.5 400.5 982 401 983.5 401.3 982 401.6 981.5 402.1 981.2 403.6 980.9 402.1 980.4 401.6 978.9 401.3 980.4 401 980.9 400.5 981.2 399Z"/>
<path d="M992.6 388.4C992.8 389.5 993.2 389.9 994.3 390.1 993.2 390.3 992.8 390.7 992.6 391.8 992.4 390.7 992 390.3 990.9 390.1 992 389.9 992.4 389.5 992.6 388.4Z"/></g>
<!-- selection -->
<rect x="517.6" y="147.5" width="263.2" height="84" stroke="#8b3dff" stroke-width="1.5"/>
<g fill="#fff" stroke="#000" stroke-opacity=".12" stroke-width=".6">
<circle cx="517.6" cy="147.5" r="4.9"/><circle cx="780.8" cy="147.5" r="4.9"/><circle cx="517.6" cy="231.5" r="4.9"/><circle cx="780.8" cy="231.5" r="4.9"/>
<rect x="514.8" y="182.3" width="5.6" height="14.4" rx="2.8"/><rect x="778" y="182.3" width="5.6" height="14.4" rx="2.8"/>
<circle cx="818.2" cy="189.6" r="9.7"/>
</g>
<g stroke="#222" stroke-width=".95"><path d="M814.6 187.8A3.9 3.9 0 0 1 820.6 186.6L821.8 187.8M821.9 185.3V187.9H819.3M821.8 191.4A3.9 3.9 0 0 1 815.8 192.6L814.6 191.4M814.5 193.9V191.3H817.1"/></g>
<!-- floating toolbar icons -->
<g stroke="#fff" stroke-width="1.4">
<path d="M617 276.6H615.8A1.6 1.6 0 0 1 614.2 275V267A1.6 1.6 0 0 1 615.8 265.4H621.6A1.6 1.6 0 0 1 623.2 267V267.4"/><rect x="619.3" y="269.4" width="9.2" height="10.4" rx="1.6"/><path d="M623.9 272.4V276.8M621.7 274.6H626.1"/>
<path d="M642.4 267.4H656.6M646.6 267V266.2A1.8 1.8 0 0 1 648.4 264.4H650.6A1.8 1.8 0 0 1 652.4 266.2V267M644.2 267.8L644.8 278.6A1.6 1.6 0 0 0 646.4 280.1H652.6A1.6 1.6 0 0 0 654.2 278.6L654.8 267.8M647.6 270.6V276.8M651.4 270.6V276.8"/>
</g>
<g fill="#fff"><circle cx="671.4" cy="272.9" r="1.65"/><circle cx="677.1" cy="272.9" r="1.65"/><circle cx="682.8" cy="272.9" r="1.65"/></g>
</svg>

</body>
</html>
